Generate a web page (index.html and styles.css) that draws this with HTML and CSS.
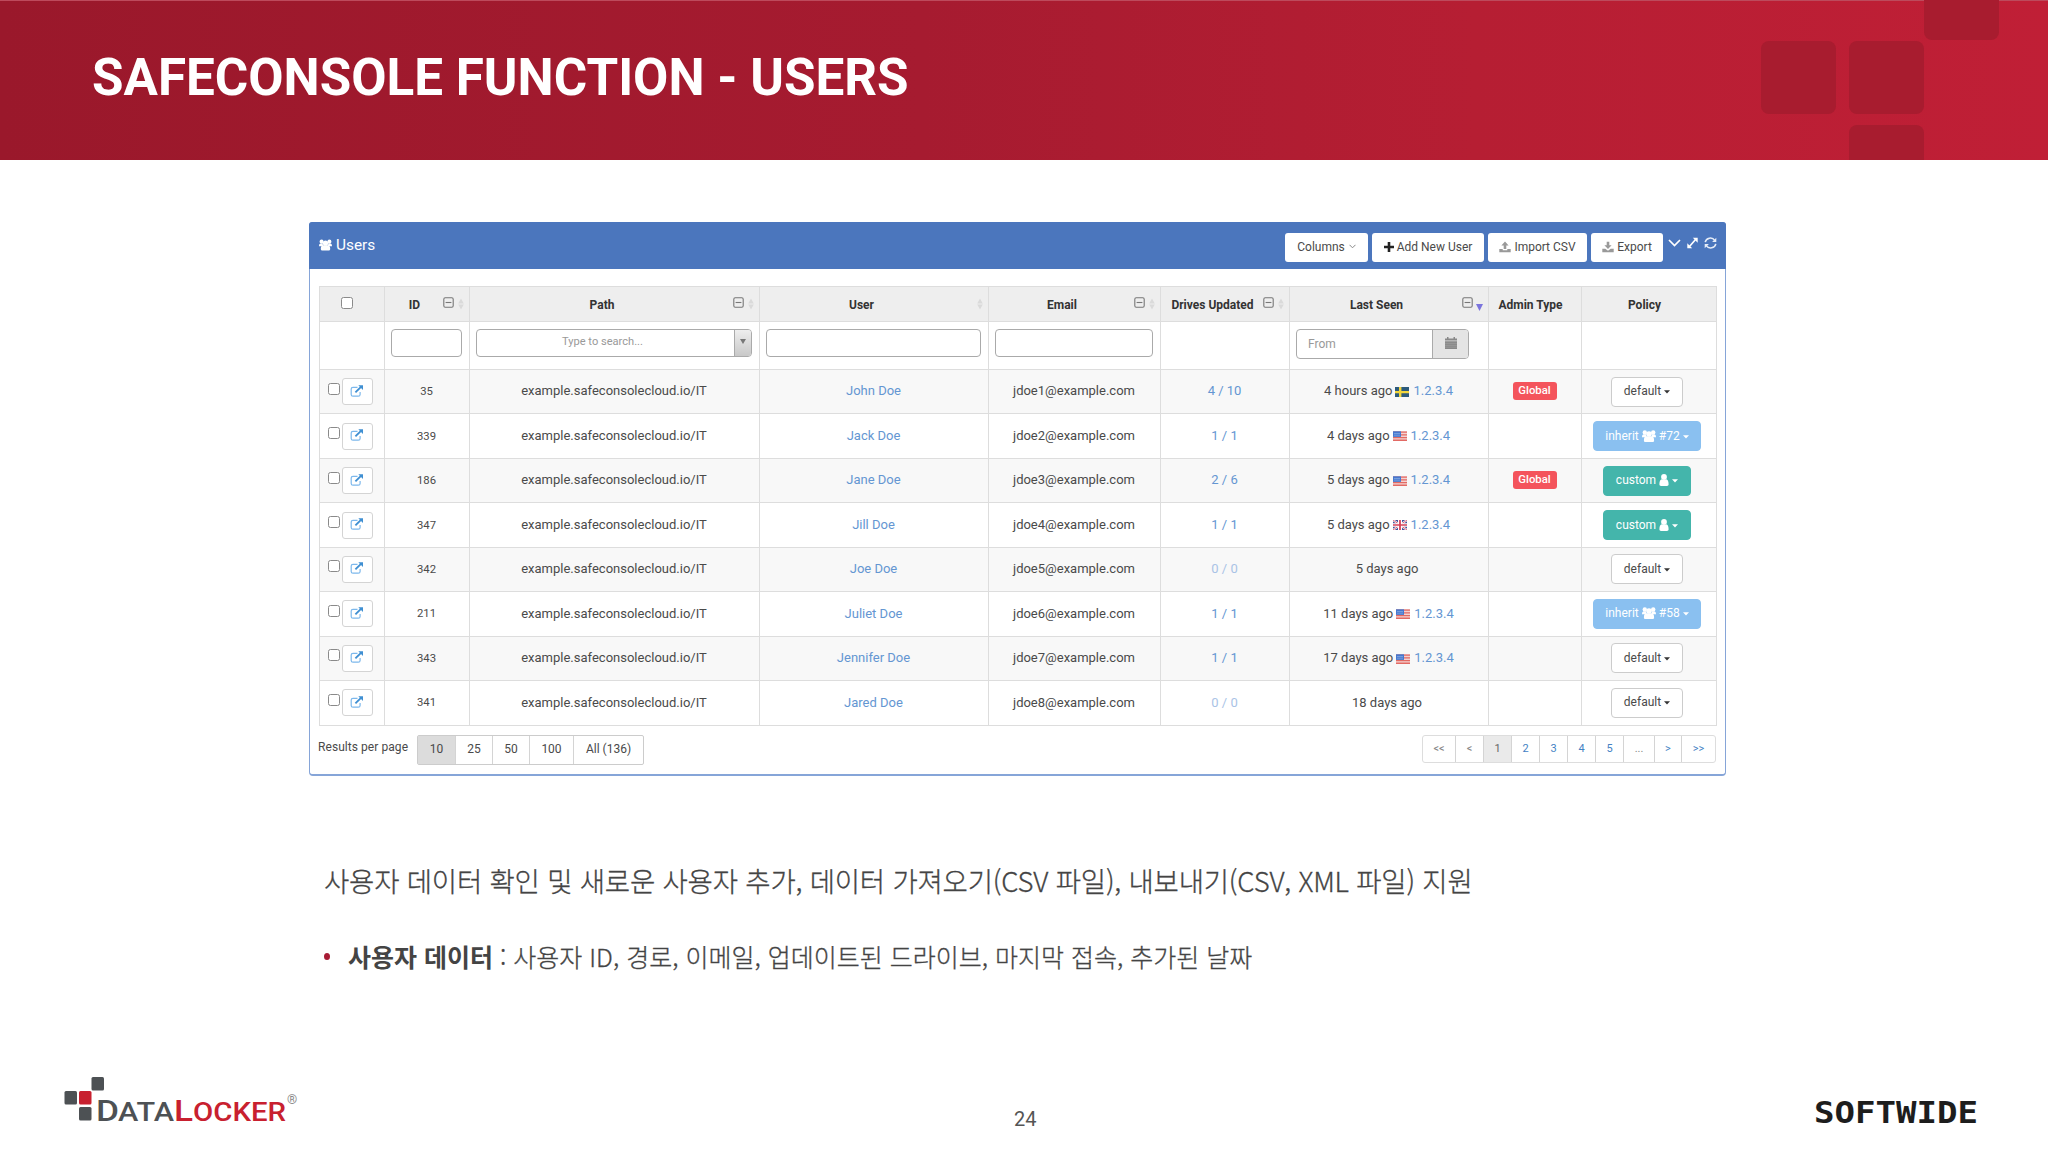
FILE: index.html
```html
<!DOCTYPE html>
<html lang="ko">
<head>
<meta charset="utf-8">
<title>SafeConsole Function - Users</title>
<link rel="stylesheet" href="styles.css">
</head>
<body>
<svg class="defs" width="0" height="0" aria-hidden="true">
  <symbol id="group" viewBox="0 0 14 12"><circle cx="2.800" cy="2.400" r="2.200"/><circle cx="11.200" cy="2.400" r="2.200"/><circle cx="7" cy="4" r="2.800"/><path d="M0 7.4C0 5 .8 4.3 2 4.3h2.2C3.900 6 4.400 6.600 5 7.300H1.400C.5 7.300 0 7.400 0 7.400zM14 7.400C14 5 13.200 4.300 12 4.300H9.800C10.100 6 9.600 6.600 9 7.300h3.600c.9 0 1.400.1 1.400.1z"/><path d="M1.900 10.400C1.900 7.600 2.800 6.200 4.600 6.200h4.800c1.800 0 2.700 1.400 2.700 4.200 0 1-.7 1.600-1.600 1.600h-7c-.9 0-1.600-.6-1.600-1.600z"/></symbol>
  <symbol id="person" viewBox="0 0 10 12"><circle cx="5" cy="3" r="2.900"/><path d="M.4 10.300C.4 7.500 1.200 5.600 2.800 5.300c1.300 1 3.100 1 4.400 0 1.600.3 2.400 2.200 2.400 5 0 1-.7 1.700-1.600 1.700H2C1.100 12 .4 11.300.4 10.300z"/></symbol>
  <symbol id="open" viewBox="0 0 14 12"><path d="M7.500 2.300H3A1.800 1.800 0 0 0 1.200 4.100v5.300A1.800 1.800 0 0 0 3 11.200h5.300a1.800 1.800 0 0 0 1.800-1.800V7" fill="none" stroke="#7cb8ec" stroke-width="1.200"/><path d="M5.400 7.400 11 1.800" stroke="#3f8fd2" stroke-width="1.900"/><path d="M8.300.3H13v4.700z" fill="#3f8fd2"/></symbol>
  <symbol id="sort" viewBox="0 0 6 12"><path d="M3 .5 5.800 5.500H.2zM3 11.500.2 6.500h5.600z"/></symbol>
  <symbol id="minus" viewBox="0 0 11 11"><rect x=".8" y=".8" width="9.400" height="9.400" rx="1.400" fill="none" stroke="#777" stroke-width="1.100"/><path d="M2.600 5.500h5.800" stroke="#777" stroke-width="1.100"/></symbol>
  <symbol id="caret" viewBox="0 0 6 4"><path d="M0 .3h6L3 3.500z"/></symbol>
  <symbol id="up" viewBox="0 0 12 12"><path d="M6 .5 9.600 4.500H7.300V8H4.700V4.500H2.400zM.3 8h3.400v1.300h4.600V8h3.400v3.300H.3z"/></symbol>
  <symbol id="down" viewBox="0 0 12 12"><path d="M6 8 9.600 4.200H7.300V.7H4.700v3.500H2.400zM.3 7.800h3l2.700 2 2.700-2h3v3.500H.3z"/></symbol>
  <symbol id="us" viewBox="0 0 14 10"><path fill="#f5d3d0" d="M0 0h14v10H0z"/><path fill="#e26a64" d="M0 .5h14v1.300H0zM0 3.200h14v1.300H0zM0 5.900h14v1.300H0zM0 8.500h14V10H0z"/><path fill="#4579d0" d="M0 .3h8v5.600H0z"/><path fill="#88a8e0" d="M1 2h6v.7H1zM1 3.800h6v.7H1z"/></symbol>
  <symbol id="se" viewBox="0 0 14 10"><path fill="#2c5a7c" d="M0 0h14v10H0z"/><path fill="#f2d63c" d="M4 0h2.400v10H4zM0 3.900h14v2.300H0z"/></symbol>
  <symbol id="gb" viewBox="0 0 14 10"><path fill="#44529a" d="M0 0h14v10H0z"/><path stroke="#fff" stroke-width="2" d="m0 0 14 10M14 0 0 10"/><path stroke="#d5435a" stroke-width=".8" d="m0 0 14 10M14 0 0 10"/><path fill="#fff" d="M5 0h4v10H5zM0 3.200h14v3.600H0z"/><path fill="#d5435a" d="M6.100 0h1.800v10H6.100zM0 4.200h14v1.600H0z"/></symbol>
</svg>

<div class="slide">
  <header class="banner">
    <h1>SAFECONSOLE FUNCTION - USERS</h1>
    <i class="block b1"></i><i class="block b2"></i><i class="block b3"></i><i class="block b4"></i>
  </header>

  <section class="panel">
    <div class="panel-head">
      <svg class="i-group"><use href="#group"/></svg>
      <span class="panel-title">Users</span>
      <div class="tools">
        <span class="tool w-col">Columns<svg width="7" height="5" viewBox="0 0 7 5"><path d="m.5.8 3 3 3-3" fill="none" stroke="#888" stroke-width="1"/></svg></span>
        <span class="tool w-add"><svg width="10" height="10" viewBox="0 0 10 10"><path d="M5 0v10M0 5h10" stroke="#222" stroke-width="2.600"/></svg>Add New User</span>
        <span class="tool w-imp"><svg class="grey" width="12" height="12"><use href="#up"/></svg>Import CSV</span>
        <span class="tool w-exp"><svg class="grey" width="12" height="12"><use href="#down"/></svg>Export</span>
      </div>
      <div class="window-icons">
        <svg width="13" height="12" viewBox="0 0 13 12"><path d="m1 3 5.500 5.500L12 3" fill="none" stroke="#fff" stroke-width="1.700"/></svg>
        <svg width="11" height="12" viewBox="0 0 11 12"><path d="m2 10 7-8" stroke="#fff" stroke-width="1.700"/><path d="M5.800.8h4.900v4.900zM.3 6.300v4.900h4.900z" fill="#fff"/></svg>
        <svg width="13" height="12" viewBox="0 0 13 12"><path d="M1.200 5.200A5.200 5 0 0 1 10.700 3.400M11.800 6.800A5.200 5 0 0 1 2.300 8.600" fill="none" stroke="#e6edf8" stroke-width="1.500"/><path d="M12.300.7v4.200H8.100zM.7 11.300V7.100h4.200z" fill="#e6edf8"/></svg>
      </div>
    </div>

    <div class="grid">
      <div class="row head">
        <div><i class="check"></i></div>
        <div class="s">ID<svg class="m"><use href="#minus"/></svg><svg class="o"><use href="#sort"/></svg></div>
        <div class="s">Path<svg class="m"><use href="#minus"/></svg><svg class="o"><use href="#sort"/></svg></div>
        <div class="s">User<svg class="o"><use href="#sort"/></svg></div>
        <div class="s">Email<svg class="m"><use href="#minus"/></svg><svg class="o"><use href="#sort"/></svg></div>
        <div class="s">Drives Updated<svg class="m"><use href="#minus"/></svg><svg class="o"><use href="#sort"/></svg></div>
        <div class="s">Last Seen<svg class="m"><use href="#minus"/></svg><svg class="sorted" viewBox="0 0 7 7"><path d="M0 0h7L3.500 7z"/></svg></div>
        <div class="n">Admin Type</div>
        <div class="n">Policy</div>
      </div>
      <div class="row filter">
        <div></div>
        <div><span class="field"></span></div>
        <div><span class="field combo"><span>Type to search...</span><b><svg width="6" height="5" viewBox="0 0 6 5"><path d="M0 0h6L3 5z" fill="#777"/></svg></b></span></div>
        <div><span class="field"></span></div>
        <div><span class="field"></span></div>
        <div></div>
        <div><span class="field date"><span>From</span><b><svg width="12" height="12" viewBox="0 0 12 12"><path fill="#888" d="M0 1.500h2V0h1.500v1.500h5V0H10v1.500h2v2H0zM0 4.300h12V12H0z"/><path d="M0 6.300h12M0 8.300h12M0 10.200h12" stroke="#aaa" stroke-width=".5"/></svg></b></span></div>
        <div></div>
        <div></div>
      </div>

      <div class="row odd"><div class="act"><i class="check"></i><span class="go"><svg><use href="#open"/></svg></span></div><div class="id">35</div><div>example.safeconsolecloud.io/IT</div><div class="link">John Doe</div><div>jdoe1@example.com</div><div class="link">4 / 10</div><div class="seen">4 hours ago<svg class="flag"><use href="#se"/></svg><a>1.2.3.4</a></div><div><span class="badge">Global</span></div><div class="pol"><span class="btn">default<svg class="caret"><use href="#caret"/></svg></span></div></div>
      <div class="row"><div class="act"><i class="check"></i><span class="go"><svg><use href="#open"/></svg></span></div><div class="id">339</div><div>example.safeconsolecloud.io/IT</div><div class="link">Jack Doe</div><div>jdoe2@example.com</div><div class="link">1 / 1</div><div class="seen">4 days ago<svg class="flag"><use href="#us"/></svg><a>1.2.3.4</a></div><div></div><div class="pol"><span class="btn inherit">inherit<svg class="g"><use href="#group"/></svg>#72<svg class="caret"><use href="#caret"/></svg></span></div></div>
      <div class="row odd"><div class="act"><i class="check"></i><span class="go"><svg><use href="#open"/></svg></span></div><div class="id">186</div><div>example.safeconsolecloud.io/IT</div><div class="link">Jane Doe</div><div>jdoe3@example.com</div><div class="link">2 / 6</div><div class="seen">5 days ago<svg class="flag"><use href="#us"/></svg><a>1.2.3.4</a></div><div><span class="badge">Global</span></div><div class="pol"><span class="btn custom">custom<svg class="p"><use href="#person"/></svg><svg class="caret"><use href="#caret"/></svg></span></div></div>
      <div class="row"><div class="act"><i class="check"></i><span class="go"><svg><use href="#open"/></svg></span></div><div class="id">347</div><div>example.safeconsolecloud.io/IT</div><div class="link">Jill Doe</div><div>jdoe4@example.com</div><div class="link">1 / 1</div><div class="seen">5 days ago<svg class="flag"><use href="#gb"/></svg><a>1.2.3.4</a></div><div></div><div class="pol"><span class="btn custom">custom<svg class="p"><use href="#person"/></svg><svg class="caret"><use href="#caret"/></svg></span></div></div>
      <div class="row odd"><div class="act"><i class="check"></i><span class="go"><svg><use href="#open"/></svg></span></div><div class="id">342</div><div>example.safeconsolecloud.io/IT</div><div class="link">Joe Doe</div><div>jdoe5@example.com</div><div class="link faded">0 / 0</div><div class="seen plain">5 days ago</div><div></div><div class="pol"><span class="btn">default<svg class="caret"><use href="#caret"/></svg></span></div></div>
      <div class="row"><div class="act"><i class="check"></i><span class="go"><svg><use href="#open"/></svg></span></div><div class="id">211</div><div>example.safeconsolecloud.io/IT</div><div class="link">Juliet Doe</div><div>jdoe6@example.com</div><div class="link">1 / 1</div><div class="seen">11 days ago<svg class="flag"><use href="#us"/></svg><a>1.2.3.4</a></div><div></div><div class="pol"><span class="btn inherit">inherit<svg class="g"><use href="#group"/></svg>#58<svg class="caret"><use href="#caret"/></svg></span></div></div>
      <div class="row odd"><div class="act"><i class="check"></i><span class="go"><svg><use href="#open"/></svg></span></div><div class="id">343</div><div>example.safeconsolecloud.io/IT</div><div class="link">Jennifer Doe</div><div>jdoe7@example.com</div><div class="link">1 / 1</div><div class="seen">17 days ago<svg class="flag"><use href="#us"/></svg><a>1.2.3.4</a></div><div></div><div class="pol"><span class="btn">default<svg class="caret"><use href="#caret"/></svg></span></div></div>
      <div class="row"><div class="act"><i class="check"></i><span class="go"><svg><use href="#open"/></svg></span></div><div class="id">341</div><div>example.safeconsolecloud.io/IT</div><div class="link">Jared Doe</div><div>jdoe8@example.com</div><div class="link faded">0 / 0</div><div class="seen plain">18 days ago</div><div></div><div class="pol"><span class="btn">default<svg class="caret"><use href="#caret"/></svg></span></div></div>
    </div>

    <div class="panel-foot">
      <span class="results">Results per page</span>
      <div class="sizes"><span class="on">10</span><span>25</span><span>50</span><span>100</span><span>All (136)</span></div>
      <div class="pages"><span class="off">&lt;&lt;</span><span class="off">&lt;</span><span class="on">1</span><span>2</span><span>3</span><span>4</span><span>5</span><span class="off">...</span><span>&gt;</span><span>&gt;&gt;</span></div>
    </div>
  </section>

  <section class="notes">
    <p class="lead">사용자 데이터 확인 및 새로운 사용자 추가, 데이터 가져오기(CSV 파일), 내보내기(CSV, XML 파일) 지원</p>
    <p class="item"><i class="dot"></i><span class="text"><b>사용자 데이터</b> : 사용자 ID, 경로, 이메일, 업데이트된 드라이브, 마지막 접속, 추가된 날짜</span></p>
  </section>

  <footer class="foot">
    <svg class="datalocker" width="236" height="50" viewBox="0 0 236 50">
      <g fill="#4d5154"><rect x="27.500" y="1" width="12.500" height="13.500" rx="1.500"/><rect x=".5" y="15" width="12.500" height="13.500" rx="1.500"/><rect x="15" y="31" width="12.500" height="13.500" rx="1.500"/></g>
      <rect x="15" y="15" width="12.500" height="13.500" rx="1.500" fill="#c8202f"/>
      <g class="brand">
        <text x="32" y="44.500" font-size="30" textLength="23" lengthAdjust="spacingAndGlyphs">D</text>
        <text x="54" y="44.500" font-size="25.500" textLength="56" lengthAdjust="spacingAndGlyphs">ATA</text>
        <g class="red"><text x="110" y="44.500" font-size="30" textLength="19" lengthAdjust="spacingAndGlyphs">L</text>
        <text x="129" y="44.500" font-size="25.500" textLength="93" lengthAdjust="spacingAndGlyphs">OCKER</text></g>
      </g>
      <text class="reg" x="223" y="28" font-size="13">®</text>
    </svg>
    <span class="num">24</span>
    <svg class="softwide" width="176" height="40" viewBox="0 0 176 40"><text x="5" y="31" font-size="30.500" textLength="164" lengthAdjust="spacingAndGlyphs">SOFTWIDE</text></svg>
  </footer>
</div>
</body>
</html>
```
FILE: styles.css
```css
* { box-sizing: border-box; }
body { margin: 0; background: #fff; font-family: Roboto, "Liberation Sans", sans-serif; }
p, h1 { margin: 0; }
.defs { position: absolute; }
.slide { width: 2048px; height: 1152px; display: flex; flex-direction: column; overflow: hidden; }

.banner {
  position: relative; height: 160px; flex: none; padding: 47px 0 0 92px;
  background: linear-gradient(90deg, #9a182b 0%, #a61b30 45%, #b61e33 72%, #c01f36 100%);
  border-top: 1px solid #bd4a5c;
}
.banner h1 { font-size: 51.200px; line-height: 60px; font-weight: 700; color: #fff; white-space: nowrap; }
.block { position: absolute; width: 75px; background: #a81c2f; border-radius: 8px; }
.b1 { left: 1761px; top: 40px; height: 73px; }
.b2 { left: 1849px; top: 40px; height: 73px; }
.b3 { left: 1924px; top: -1px; height: 40px; border-radius: 0 0 8px 8px; }
.b4 { left: 1849px; top: 124px; height: 35px; border-radius: 8px 8px 0 0; }

.panel {
  width: 1417px; height: 554px; flex: none; margin: 62px 0 0 309px;
  border: 1px solid #86a5d8; border-bottom-width: 2px; border-radius: 4px;
  display: flex; flex-direction: column; color: #4a4a4a;
}
.panel-head {
  height: 47px; margin: -1px -1px 0; padding: 0 9px 0 10px; background: #4b76bd;
  border-radius: 3px 3px 0 0; display: flex; align-items: center;
}
.i-group { width: 13px; height: 12px; fill: #fff; margin: 0 4px 1px 0; }
.panel-title { color: #fff; font-size: 15.400px; padding-bottom: 1px; }
.tools { margin-left: auto; display: flex; gap: 4px; padding-top: 3px; }
.tool {
  height: 29px; background: #fff; border-radius: 3px; font-size: 12px; padding-bottom: 1px;
  display: flex; align-items: center; justify-content: center; gap: 3px;
}
.w-col { width: 83px; gap: 4px; }
.w-add { width: 112px; }
.w-imp { width: 99px; }
.w-exp { width: 72px; }
.grey { fill: #999; }
.window-icons { display: flex; align-items: center; gap: 6px; margin-left: 5px; padding-bottom: 5px; }

.grid { margin: 17px 0 0 9px; width: 1398px; border-right: 1px solid #ddd; border-bottom: 1px solid #ddd; }
.row {
  display: grid; height: 44.440px; font-size: 13px;
  grid-template-columns: 65px 85px 290px 229px 172px 129px 199px 93px 135px;
}
.row > div {
  border-left: 1px solid #ddd; border-top: 1px solid #ddd; padding: 0 1px 1.500px 0;
  display: flex; align-items: center; justify-content: center; white-space: nowrap;
}
.row.odd { background: #f8f8f8; }
.row.head { height: 35px; background: #eee; font-size: 12px; font-weight: 700; color: #333; }
.row.head > div { position: relative; padding-bottom: 0; padding-top: 1px; }
.row.head .s { padding-right: 25px; }
.row.head .n { padding-right: 9px; }
.row.head .check { margin: 0 9px 3px 0; }
.m { position: absolute; right: 15px; top: 10px; width: 11px; height: 11px; }
.o { position: absolute; right: 5px; top: 11px; width: 6px; height: 12px; fill: #dadada; }
.sorted { position: absolute; right: 5px; top: 17px; width: 7px; height: 7px; fill: #7b74dd; }

.row.filter { height: 48px; }
.row.filter > div { align-items: flex-start; justify-content: stretch; padding: 7px 7px 0 6px; }
.field {
  height: 28px; flex: 1; border: 1px solid #aaa; border-radius: 4px; background: #fff;
  display: flex; align-items: center; color: #999; overflow: hidden;
}
.field span { flex: 1; }
.field b { align-self: stretch; display: flex; align-items: center; justify-content: center; border-left: 1px solid #aaa; }
.combo { font-size: 11.100px; text-align: center; }
.combo span { padding: 0 6px 3px 0; }
.combo b { width: 17px; background: linear-gradient(#eee, #c8c8c8); padding-bottom: 4px; }
.date { flex: none; width: 173px; height: 30px; font-size: 12px; }
.date span { padding-left: 11px; }
.date b { width: 36px; background: #e4e4e4; padding-bottom: 2px; }

.check { width: 12px; height: 12px; border: 1px solid #8a8a8a; border-radius: 2.500px; background: #fff; }
.row > .act { justify-content: flex-start; padding: 0 0 0 8px; }
.act .check { margin: 0 2px 6px 0; }
.go { width: 31px; height: 27px; border: 1px solid #d4d4d4; border-radius: 3px; background: #fff; display: flex; align-items: center; justify-content: center; }
.go svg { width: 14px; height: 12px; margin: 0 1px 2px 0; }
.row .id { font-size: 11.300px; padding-bottom: 0; }
.row .link, .row a { color: #6496d2; }
.row .faded { color: #a9c3e6; }
.row .plain { padding-right: 4px; }
.flag { width: 14px; height: 10px; margin: 2px 4px 0 3px; }
.badge { height: 18px; width: 44px; background: #f4545c; color: #fff; border-radius: 3px; font-size: 11.300px; font-weight: 500; line-height: 18px; text-align: center; }
.row > .pol { padding: 0 4px 0 0; }
.btn {
  height: 30px; width: 72px; border: 1px solid #ccc; border-radius: 4px; background: #fff; font-size: 12px;
  display: flex; align-items: center; justify-content: center; gap: 3px; fill: #333; padding-bottom: 1px;
}
.caret { width: 6px; height: 4px; margin-top: 2px; }
.btn .g { width: 14px; height: 12px; }
.btn .p { width: 10px; height: 12px; }
.btn.inherit { width: 108px; background: #8ac0f0; border-color: #8ac0f0; color: #fff; fill: #fff; }
.btn.custom { width: 88px; background: #44b5ab; border-color: #44b5ab; color: #fff; fill: #fff; }

.panel-foot { display: flex; padding: 9px 9px 0 8px; font-size: 12px; }
.results { width: 99px; line-height: 25px; letter-spacing: 0.060px; white-space: nowrap; }
.sizes, .pages { display: grid; text-align: center; }
.sizes { height: 30px; grid-template-columns: 37px 37px 37px 44px 70px; border: 1px solid #ccc; width: 227px; line-height: 26px; border-radius: 2px; }
.sizes span + span, .pages span + span { border-left: 1px solid #d4d4d4; }
.sizes .on { background: #dcdcdc; }
.pages {
  margin-left: auto; width: 294px; height: 28px; border: 1px solid #ddd; border-radius: 3px; font-size: 11px; line-height: 25px; color: #4482c4;
  grid-template-columns: 32px 28px 28px 28px 28px 28px 28px 31px 27px 34px;
}
.pages .off { color: #888; }
.pages .on { background: #eaeaea; color: #666; }

.notes { margin: 84px 0 0 324px; color: #444; font-family: "Noto Sans CJK KR", sans-serif; font-weight: 300; white-space: nowrap; -webkit-text-stroke: 0.300px #444; }
.lead { font-size: 27.500px; line-height: 40px; letter-spacing: -0.210px; }
.item { font-size: 25px; line-height: 40px; margin-top: 36px; display: flex; align-items: center; }
.item b { font-weight: 700; -webkit-text-stroke: 0; }
.dot { width: 6px; height: 7px; border-radius: 50%; background: #a81c35; margin: 0 18px 0 0; }

.foot { margin-top: auto; height: 76px; flex: none; display: flex; align-items: flex-start; padding: 0 63px 0 64px; }
.brand { font-family: Roboto, sans-serif; font-weight: 500; fill: #4d5154; }
.brand .red { fill: #c8202f; }
.reg { fill: #888; }
.num { font-size: 20px; color: #555; margin: 31px 0 0 714px; line-height: 24px; }
.softwide { margin: 16px 0 0 auto; font-family: "DejaVu Sans Mono", monospace; font-weight: 700; fill: #1d1d1d; }
```
